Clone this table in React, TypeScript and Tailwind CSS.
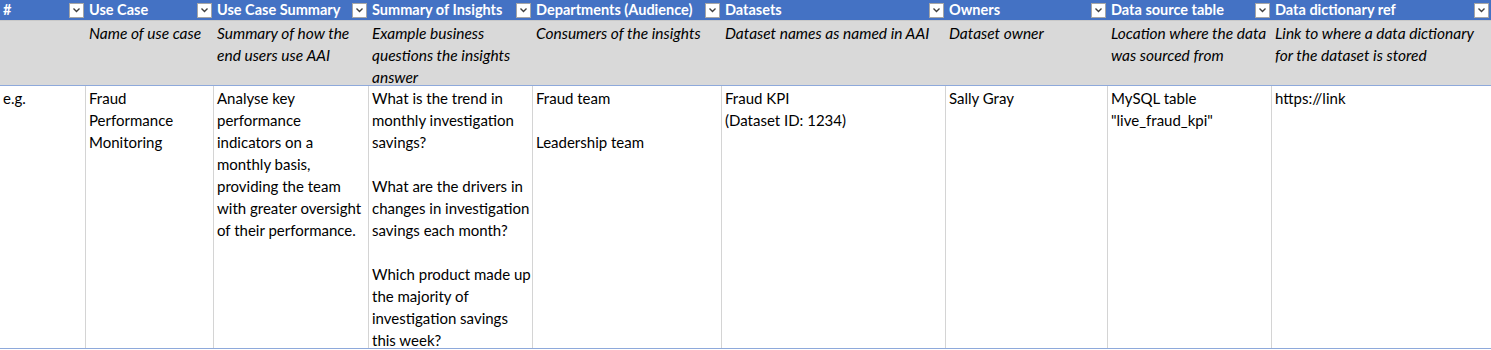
const columns = [
  { title: '#', width: 86 },
  { title: 'Use Case', width: 128 },
  { title: 'Use Case Summary', width: 155 },
  { title: 'Summary of Insights', width: 164 },
  { title: 'Departments (Audience)', width: 189 },
  { title: 'Datasets', width: 224 },
  { title: 'Owners', width: 162 },
  { title: 'Data source table', width: 164 },
  { title: 'Data dictionary ref', width: 219 },
];

const hints: string[][] = [
  [],
  ['Name of use case'],
  ['Summary of how the', 'end users use AAI'],
  ['Example business', 'questions the insights', 'answer'],
  ['Consumers of the insights'],
  ['Dataset names as named in AAI'],
  ['Dataset owner'],
  ['Location where the data', 'was sourced from'],
  ['Link to where a data dictionary', 'for the dataset is stored'],
];

const example: string[][] = [
  ['e.g.'],
  ['Fraud', 'Performance', 'Monitoring'],
  [
    'Analyse key',
    'performance',
    'indicators on a',
    'monthly basis,',
    'providing the team',
    'with greater oversight',
    'of their performance.',
  ],
  [
    'What is the trend in',
    'monthly investigation',
    'savings?',
    '',
    'What are the drivers in',
    'changes in investigation',
    'savings each month?',
    '',
    'Which product made up',
    'the majority of',
    'investigation savings',
    'this week?',
  ],
  ['Fraud team', '', 'Leadership team'],
  ['Fraud KPI', '(Dataset ID: 1234)'],
  ['Sally Gray'],
  ['MySQL table', '"live_fraud_kpi"'],
  ['https://link'],
];

const gridCols =
  'grid grid-cols-[86px_128px_155px_164px_189px_224px_162px_164px_219px]';

const FilterButton = () => (
  <span className="flex h-[15px] w-[15px] shrink-0 items-center justify-center border border-[#a6a6a6] bg-white">
    <svg width="9" height="6" viewBox="0 0 9 6" fill="none">
      <polyline points="1.5,1.5 4.5,4.5 7.5,1.5" stroke="#404040" strokeWidth="1.4" />
    </svg>
  </span>
);

const Lines = ({ lines }: { lines: string[] }) => (
  <>
    {lines.map((line, i) => (
      <div key={i} className="h-[22px] whitespace-nowrap">
        {line || '\u00a0'}
      </div>
    ))}
  </>
);

export default function App() {
  return (
    <div className="h-[350px] w-[1491px] overflow-hidden bg-white text-[15px] leading-[22px] text-black [font-family:Lato,'Liberation_Sans',sans-serif]">
      {/* Header */}
      <div className={`${gridCols} h-[21px] border-b border-[#c9c9c9] bg-[#4472c4]`}>
        {columns.map((col) => (
          <div key={col.title} className="flex items-center justify-between overflow-hidden pl-[3px] pr-[2px]">
            <span className="whitespace-nowrap text-[14.5px] font-bold leading-[20px] text-white">
              {col.title}
            </span>
            <FilterButton />
          </div>
        ))}
      </div>

      {/* Description row */}
      <div className={`${gridCols} h-[65px] border-b border-[#8ea9db] bg-[#d9d9d9] text-[15.5px] italic`}>
        {hints.map((lines, i) => (
          <div key={i} className="overflow-hidden pt-px pl-[3px]">
            <Lines lines={lines} />
          </div>
        ))}
      </div>

      {/* Example row */}
      <div className={`${gridCols} h-[263px] overflow-hidden border-b border-[#8ea9db]`}>
        {example.map((lines, i) => (
          <div
            key={i}
            className={`overflow-hidden pl-[3px] pt-px ${i < example.length - 1 ? 'border-r border-[#d4d4d4]' : ''}`}
          >
            <Lines lines={lines} />
          </div>
        ))}
      </div>
    </div>
  );
}
